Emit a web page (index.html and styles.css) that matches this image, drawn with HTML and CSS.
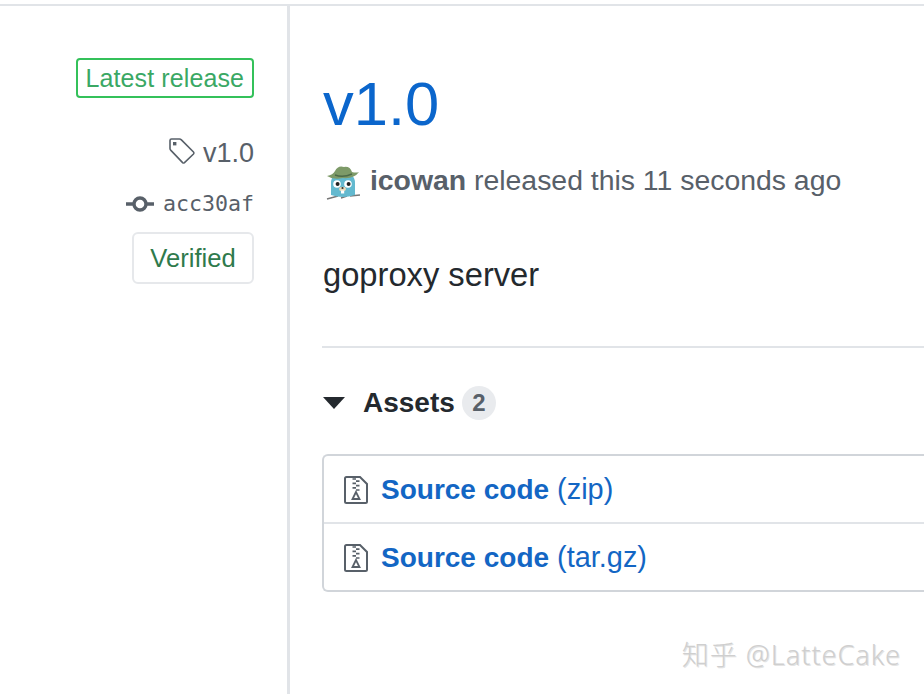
FILE: index.html
```html
<!DOCTYPE html>
<html>

<head>
  <meta charset="UTF-8">
  <meta name="viewport" content="width=device-width, initial-scale=1.0">
  <title>Releases · v1.0</title>
  <link rel="stylesheet" href="styles.css">
</head>

<body>
  <div class="release-box">
    <aside class="release-side">
      <span class="label-latest">Latest release</span>
      <div class="side-tag">
        <svg class="icon-tag" width="28" height="28" viewBox="0 0 28 28" fill="none" stroke="#586069" stroke-width="1.6">
          <path d="M2 3.5 Q2 2 3.5 2 L11.5 2 Q12.5 2 13.4 2.9 L25.5 15 Q26.4 16 25.5 17 L16.5 25.6 Q15.5 26.4 14.6 25.6 L2.9 13.4 Q2 12.5 2 11.5 Z"/>
          <rect x="5" y="5" width="3.4" height="3.4" fill="#586069" stroke="none"/>
        </svg>
        <span>v1.0</span>
      </div>
      <div class="side-commit">
        <svg width="28" height="16" viewBox="0 0 28 16" fill="none" stroke="#586069">
          <circle cx="14" cy="8" r="6" stroke-width="3.4"/>
          <path d="M0 8H8M20 8H28" stroke-width="3.4"/>
        </svg>
        <code>acc30af</code>
      </div>
      <span class="label-verified">Verified</span>
    </aside>

    <main class="release-main">
      <h1 class="release-title"><a href="#">v1.0</a></h1>
      <p class="release-by">
        <svg class="avatar" width="36" height="36" viewBox="0 0 36 36">
          <path d="M1 34 L12 31 M15 33 L21 31 M24 31 L34 30" stroke="#777" stroke-width="1.4"/>
          <path d="M5 30 V18 Q5 8 17 8 Q29 8 29 18 V30 Q17 34 5 30 Z" fill="#63b9cf"/>
          <path d="M1 11 Q7 10 9 6 Q12 0 18 2 Q24 1 26 7 Q30 8 33 7 Q28 14 17 13 Q7 15 1 11 Z" fill="#7d9a68"/>
          <path d="M9 10 Q17 13 26 9" stroke="#4c6a48" stroke-width="1.4" fill="none"/>
          <circle cx="11" cy="19" r="3.8" fill="#fff"/>
          <circle cx="22" cy="19" r="3.8" fill="#fff"/>
          <circle cx="11.6" cy="19" r="2" fill="#222"/>
          <circle cx="22.6" cy="19" r="2" fill="#222"/>
          <ellipse cx="16.5" cy="24" rx="3.4" ry="2.2" fill="#e8d9b8"/>
          <rect x="15" y="25.5" width="3.2" height="3" fill="#fff"/>
          <circle cx="16.5" cy="23" r="1.1" fill="#333"/>
        </svg>
        <a class="author" href="#">icowan</a> released this 11 seconds ago
      </p>
      <p class="release-body">goproxy server</p>

      <div class="assets-head">
        <span class="caret"></span>
        <span class="assets-title">Assets</span>
        <span class="counter">2</span>
      </div>

      <ul class="asset-list">
        <li class="asset-row">
          <svg width="24" height="28" viewBox="0 0 24 28" fill="none" stroke="#586069" stroke-width="2">
            <path d="M1 2.5 Q1 1 2.5 1 H16 L23 8 V25.5 Q23 27 21.5 27 H2.5 Q1 27 1 25.5 Z"/>
            <path d="M8.5 3H12M12 5.2H15.5M8.5 7.4H12M12 9.6H15.5M8.5 11.8H12M12 14H15.5" stroke-width="1.7"/>
            <path d="M12 16 L8.5 23 H15.5 Z" stroke-width="1.8"/>
          </svg>
          <a class="asset-link" href="#"><b>Source code</b> (zip)</a>
        </li>
        <li class="asset-row">
          <svg width="24" height="28" viewBox="0 0 24 28" fill="none" stroke="#586069" stroke-width="2">
            <path d="M1 2.5 Q1 1 2.5 1 H16 L23 8 V25.5 Q23 27 21.5 27 H2.5 Q1 27 1 25.5 Z"/>
            <path d="M8.5 3H12M12 5.2H15.5M8.5 7.4H12M12 9.6H15.5M8.5 11.8H12M12 14H15.5" stroke-width="1.7"/>
            <path d="M12 16 L8.5 23 H15.5 Z" stroke-width="1.8"/>
          </svg>
          <a class="asset-link" href="#"><b>Source code</b> (tar.gz)</a>
        </li>
      </ul>

      <div class="watermark">知乎 @LatteCake</div>
    </main>
  </div>
</body>

</html>
```

FILE: styles.css
```css
html,
body {
  height: 100%;
}

body {
  box-sizing: border-box;
  margin: 0;
  padding-top: 4px;
  overflow: hidden;
  font-family: "Liberation Sans", Arial, sans-serif;
  color: #24292e;
  background: #fff;
}

a {
  text-decoration: none;
}

.release-box {
  display: flex;
  box-sizing: border-box;
  height: 100%;
  border-top: 2px solid #e1e4e8;
}

.release-side {
  display: flex;
  flex-direction: column;
  align-items: flex-end;
  box-sizing: border-box;
  width: 290px;
  padding: 52px 33px 0 0;
  border-right: 3px solid #e1e4e8;
}

.label-latest {
  box-sizing: border-box;
  height: 40px;
  padding: 0 8px;
  font-size: 25px;
  line-height: 36px;
  letter-spacing: 0.1px;
  color: #3aa864;
  border: 2px solid #34c15a;
  border-radius: 4px;
}

.side-tag {
  display: flex;
  align-items: center;
  gap: 7px;
  margin-top: 35px;
  font-size: 27px;
  line-height: 40px;
  color: #586069;
}

.icon-tag {
  margin-top: -4px;
}

.side-commit {
  display: flex;
  align-items: center;
  gap: 9px;
  margin-top: 15px;
  color: #586069;
}

.side-commit code {
  font-family: "DejaVu Sans Mono", monospace;
  font-size: 21.6px;
  line-height: 32px;
}

.label-verified {
  box-sizing: border-box;
  width: 122px;
  height: 52px;
  margin-top: 12px;
  font-size: 25.6px;
  line-height: 48px;
  text-align: center;
  color: #2f7a4c;
  border: 2px solid #e6e8eb;
  border-radius: 6px;
}

.release-main {
  position: relative;
  flex: 1;
  min-width: 0;
  padding: 0 0 0 32px;
}

.release-title {
  margin: 56px 0 0 1px;
  font-size: 61.5px;
  font-weight: 400;
  line-height: 84px;
}

.release-title a {
  color: #0b66cc;
}

.release-by {
  margin: 14px 0 0;
  font-size: 28.4px;
  line-height: 40px;
  color: #586069;
}

.avatar {
  margin: 0 0 0 4px;
  vertical-align: middle;
}

.author {
  font-weight: 700;
  color: #586069;
}

.release-body {
  margin: 0;
  padding: 54px 0 51px 1px;
  font-size: 32.7px;
  line-height: 40px;
  border-bottom: 2px solid #e1e4e8;
}

.assets-head {
  display: flex;
  align-items: center;
  margin-top: 38px;
  height: 34px;
}

.caret {
  width: 0;
  height: 0;
  margin-left: 1px;
  border-top: 12px solid #24292e;
  border-right: 11px solid transparent;
  border-left: 11px solid transparent;
}

.assets-title {
  margin-left: 18px;
  font-size: 28px;
  font-weight: 700;
}

.counter {
  box-sizing: border-box;
  width: 34px;
  height: 34px;
  margin-left: 7px;
  font-size: 24px;
  font-weight: 700;
  line-height: 34px;
  text-align: center;
  color: #586069;
  background: #e9ebee;
  border-radius: 50%;
}

.asset-list {
  margin: 34px 0 0;
  padding: 0;
  list-style: none;
  border: 2px solid #d1d5da;
  border-right: 0;
  border-radius: 6px 0 0 6px;
}

.asset-row {
  display: flex;
  align-items: center;
  gap: 13px;
  height: 64px;
  padding: 2px 0 0 20px;
}

.asset-row + .asset-row {
  border-top: 2px solid #e1e4e8;
}

.asset-link {
  font-size: 28.9px;
  color: #1366c4;
}

.asset-link b {
  font-size: 28px;
}

.watermark {
  position: absolute;
  top: 631px;
  right: 23px;
  font-family: "Noto Sans", "Noto Sans CJK SC", sans-serif;
  font-size: 27px;
  font-weight: 300;
  line-height: 36px;
  letter-spacing: 1px;
  color: #cfcfcf;
  text-shadow: 1px 1px 0 #e4e4e4;
}
```
